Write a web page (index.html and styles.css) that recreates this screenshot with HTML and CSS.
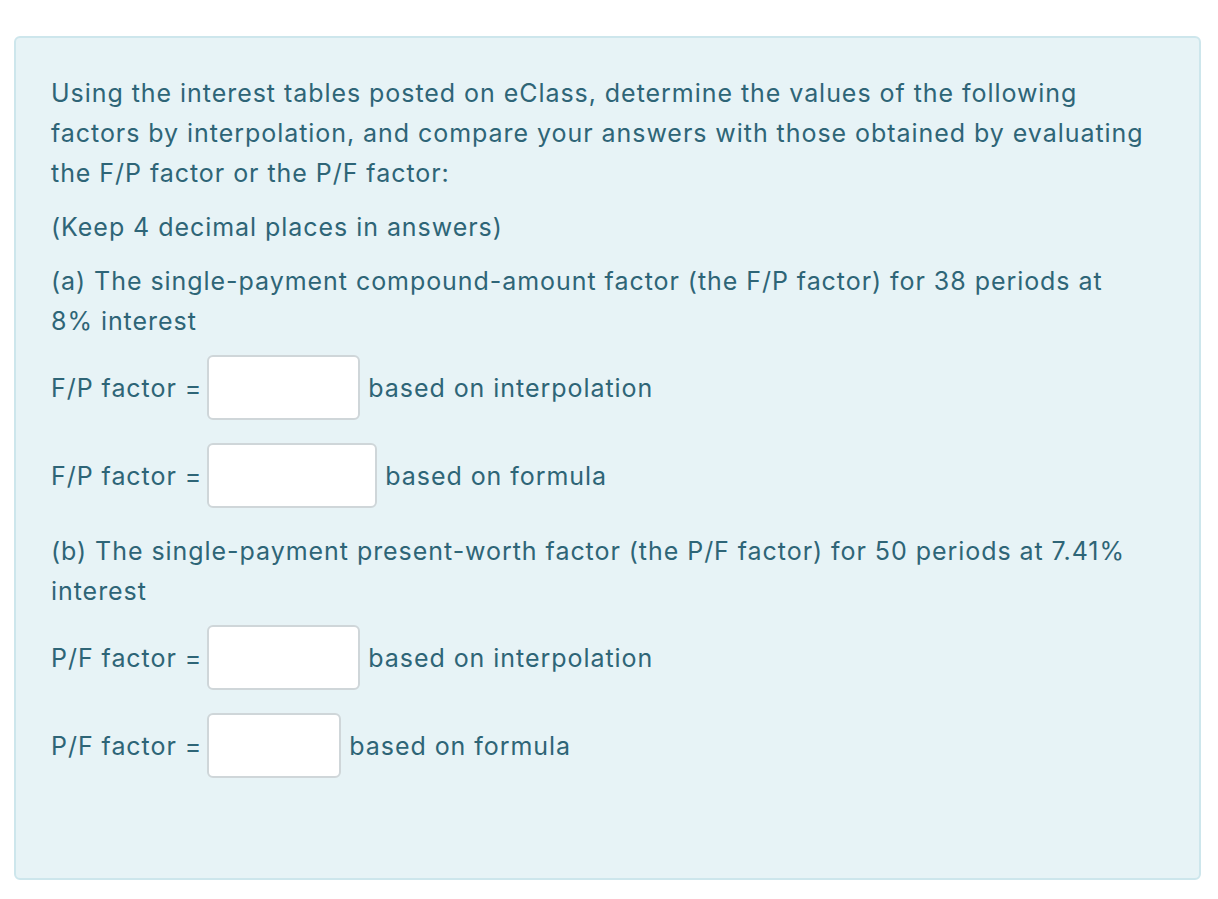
FILE: index.html
```html
<!DOCTYPE html>
<html>
<head>
<meta charset="utf-8">
<link rel="stylesheet" href="styles.css">
</head>
<body>
<div class="card">
  <p class="para">Using the interest tables posted on eClass, determine the values of the following factors by interpolation, and compare your answers with those obtained by evaluating the F/P factor or the P/F factor:</p>
  <p class="para">(Keep 4 decimal places in answers)</p>
  <p class="para">(a) The single-payment compound-amount factor (the F/P factor) for 38 periods at 8% interest</p>
  <div class="row"><span class="label">F/P factor =</span><span class="box w153"></span><span class="after">based on interpolation</span></div>
  <div class="row"><span class="label">F/P factor =</span><span class="box w170"></span><span class="after">based on formula</span></div>
  <p class="para">(b) The single-payment present-worth factor (the P/F factor) for 50 periods at 7.41% interest</p>
  <div class="row"><span class="label">P/F factor =</span><span class="box w153"></span><span class="after">based on interpolation</span></div>
  <div class="row"><span class="label">P/F factor =</span><span class="box w134"></span><span class="after">based on formula</span></div>
</div>
</body>
</html>
```
FILE: styles.css
```css
html, body {
  margin: 0;
  padding: 0;
  background: #ffffff;
}
body {
  padding: 36px 17px 0 14px;
  font-family: Inter, "Noto Sans", sans-serif;
  font-size: 25px;
  letter-spacing: 0.95px;
  line-height: 40px;
  color: #2e6577;
}
.card {
  background: #e7f3f6;
  border: 2px solid #cde6ec;
  border-radius: 6px;
  padding: 35px 50px 96px 35px;
  height: 709px;
  box-sizing: content-box;
}
.para {
  margin: 0 0 14px 0;
}
.row {
  display: flex;
  align-items: center;
  margin: 0 0 23px 0;
}
.label {
  margin-right: 5px;
}
.box {
  display: block;
  height: 61px;
  background: #ffffff;
  border: 2px solid #cfd6d9;
  border-radius: 6px;
  margin-right: 8px;
}
.w153 { width: 149px; }
.w170 { width: 166px; }
.w134 { width: 130px; }
```
